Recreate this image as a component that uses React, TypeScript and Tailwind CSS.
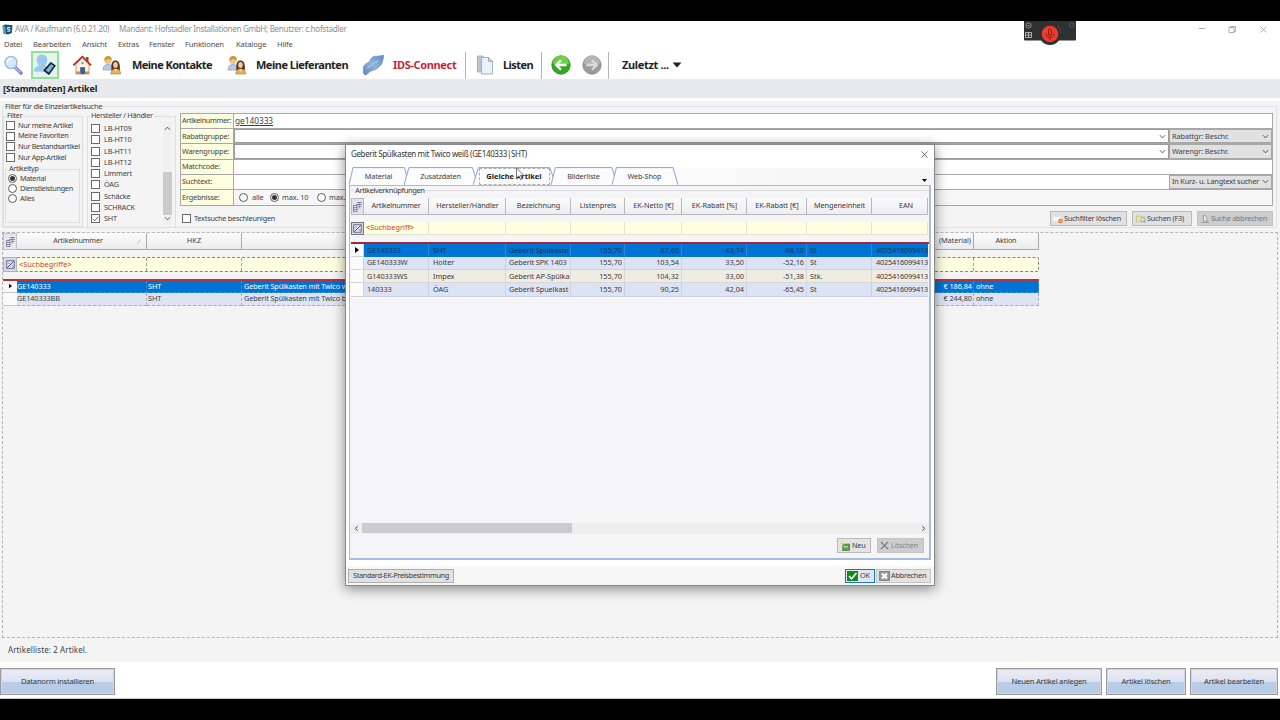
import React from "react";

type Kids = { children?: React.ReactNode };

/* ---------- icons ---------- */

const Chevron = ({ dir = "down", className = "" }: { dir?: "down" | "up" | "left" | "right"; className?: string }) => {
  const d = { down: "M1 2.5 4 5.5 7 2.5", up: "M1 5.5 4 2.5 7 5.5", left: "M5.5 1.5 2.5 4 5.5 6.5", right: "M2.5 1.5 5.5 4 2.5 6.5" }[dir];
  return (
    <svg viewBox="0 0 8 8" className={`size-[7px] shrink-0 ${className}`} fill="none" stroke="currentColor" strokeWidth="1">
      <path d={d} />
    </svg>
  );
};

const Magnifier = () => (
  <svg viewBox="0 0 20 20" className="size-5">
    <path d="M12 12 18 18" stroke="#7d79c4" strokeWidth="3.4" strokeLinecap="round" />
    <path d="M12 12 17.4 17.2" stroke="#c4c0ee" strokeWidth="1.2" strokeLinecap="round" />
    <circle cx="8" cy="7.4" r="6" fill="#cfe9f8" stroke="#a5bccf" strokeWidth="1.5" />
    <path d="M4 7.4A4 4 0 0 1 9 3.6" fill="none" stroke="#fff" strokeWidth="1.6" />
  </svg>
);

const ContactPhone = () => (
  <svg viewBox="0 0 24 24" className="size-6">
    <path d="M1 18.500c0-3.500 2-4.800 5-5.700C4.500 11 3.800 9 3.800 6.800 3.800 3.500 6 1.500 9 1.500s5.200 2 5.200 5.300c0 2.200-.7 4.400-2.200 6 2.500.8 4.500 2 5 4.200l-1.500 2z" fill="#9dc9ec" />
    <path d="m11 17.500 6.800-7.800 4.400 3-6.400 8.600z" fill="#27394d" stroke="#1d2a39" strokeWidth="1.200" strokeLinejoin="round" />
    <path d="m12.800 17.300 5.300-6 2.600 1.700-5 6.500z" fill="#7db4e0" />
  </svg>
);

const House = () => (
  <svg viewBox="0 0 20 20" className="size-5">
    <path d="M14 2h2.500v5H14z" fill="#a63a2a" />
    <path d="M4 9v10h13V9l-6.500-6z" fill="#fdf3e2" stroke="#b98a5a" strokeWidth=".8" />
    <path d="M1.300 10.400 10.400 1.600 19 10.400" fill="none" stroke="#b5392b" strokeWidth="2" strokeLinejoin="round" />
    <path d="M8.200 12.200h4.800V19H8.200z" fill="#3d5f93" />
    <path d="M4 16.500h4.200V19H4zM13 16.500h4V19h-4z" fill="#d98a3c" />
    <circle cx="10.500" cy="8" r="1.300" fill="#7a9cc8" />
  </svg>
);

const People = () => (
  <svg viewBox="0 0 20 20" className="size-5">
    <path d="M1 15c0-4 2-5.500 5-5.500s5 1.500 5 5.500z" fill="#b9cbe6" stroke="#7d90b3" strokeWidth=".6" />
    <circle cx="6" cy="5.600" r="3.500" fill="#f0c18c" />
    <path d="M2.400 6C2 2.600 4 1.100 6.300 1.100S10 2.600 9.600 5.300C8 5 6.500 4.200 5.500 3.500 5 5 3.500 5.500 2.400 6z" fill="#c99a2e" />
    <path d="M9.500 15.500c-1-8.500 1.500-10 4-10s5 2 4.300 10z" fill="#5b3424" />
    <ellipse cx="13.500" cy="10" rx="2.300" ry="2.900" fill="#f3c79c" />
    <path d="M8.800 19c0-3.600 2-5 4.900-5s5 1.400 5 5z" fill="#e4b250" stroke="#a97c26" strokeWidth=".6" />
    <path d="m12 14 1.700 3 1.600-3z" fill="#f8dcb8" />
  </svg>
);

const Feather = () => (
  <svg viewBox="0 0 22 22" className="size-[22px]">
    <defs>
      <linearGradient id="ft" x1="0" y1="1" x2="1" y2="0">
        <stop offset="0" stopColor="#6483ba" />
        <stop offset=".5" stopColor="#8fb2da" />
        <stop offset="1" stopColor="#5d8bc9" />
      </linearGradient>
    </defs>
    <path d="M1.500 15.500c-.8-2.300.6-3.300 1-4.500.8-1 2.800-2 4.700-3.100C8.200 5.500 9.500 3 12.500 2.300c3-.4 5.500.2 8.800-1.300.9 2.500-.3 4-.8 6-.3 3-1.500 4-3.100 5.500-1.900 2.500-4.400 3.200-6.900 4-3 .5-4 3-7 4.700C1.500 20.500.8 18 1.500 15.500z" fill="url(#ft)" stroke="#6a88b8" strokeWidth=".6" />
    <path d="M5 14c3-2 6-5 11-7" fill="none" stroke="#a5c2e4" strokeWidth="1.400" />
  </svg>
);

const Docs = () => (
  <svg viewBox="0 0 18 20" className="h-5 w-[18px]">
    <path d="M1.500 1h5l2 1.500V17h-7z" fill="#b9c6d3" stroke="#93a2b3" strokeWidth=".8" />
    <path d="M5.500 2.500h7l4 4V19h-11z" fill="#e9f2fa" stroke="#9aabbc" strokeWidth=".9" />
    <path d="M12.500 2.500v4h4z" fill="#c3d3e2" stroke="#8fa1b3" strokeWidth=".7" />
  </svg>
);

const RoundArrow = ({ green }: { green?: boolean }) => (
  <svg viewBox="0 0 20 20" className="size-5">
    <circle cx="10" cy="10" r="9.200" fill={green ? "#35a81f" : "#9b9b9b"} stroke={green ? "#2c861c" : "#8d8d8d"} strokeWidth=".8" />
    <path d="M2 8.500a8 8 0 0 1 16 0c-5 2.500-11 2.500-16 0z" fill={green ? "#6cd048" : "#b5b5b5"} />
    <path
      d={green ? "M15.500 10H6M10 5.200 5.200 10 10 14.800" : "M4.500 10H14M10 5.200 14.800 10 10 14.800"}
      fill="none"
      stroke={green ? "#fff" : "#dcdcdc"}
      strokeWidth="2.300"
    />
  </svg>
);

const AppLogo = () => (
  <svg viewBox="0 0 11 11" className="size-[11px]">
    <path d="M.5 2 3 .5 10.500 1.200 9.800 9 6 10.600 1.500 9.500z" fill="#20506f" />
    <path d="M.5 2 3.300 2.500 4 10 1.500 9.500z" fill="#58a4c9" />
    <path d="M8.400 3.500H5.600v1.800h2.200v1.900H5.200" fill="none" stroke="#e8f4fa" strokeWidth="1" />
  </svg>
);

const ColumnsIcon = () => (
  <svg viewBox="0 0 11 12" className="h-3 w-[11px]" fill="none" stroke="#6d7594" strokeWidth=".8">
    <path d="M1.500 4.500h3.500v6H1.500zM1.500 6.500H5M1.500 8.500H5M5 1.500h5M4 3.500h6M7 1.500v6M7 5.500h2.500" />
  </svg>
);

const FilterIcon = () => (
  <svg viewBox="0 0 10 10" className="size-[9px]" fill="none">
    <path d="M.8.8h8.400v8.400H.8z" fill="#e9e9f4" stroke="#4a5180" strokeWidth=".9" />
    <path d="M1.500 8.500 8.500 1.500" stroke="#3f4672" strokeWidth="1.100" />
    <path d="M2 3.500h2.500M6 6.500h2v1.500" stroke="#6a70a0" strokeWidth=".8" />
  </svg>
);

/* ---------- form bits ---------- */

const Box = ({ on }: { on?: boolean }) => (
  <span className="flex size-[9px] shrink-0 items-center justify-center border border-[#6a6a6a] bg-white">
    {on && (
      <svg viewBox="0 0 8 8" className="size-2" fill="none" stroke="#333" strokeWidth=".9">
        <path d="m1 4 2 2 4-4.500" />
      </svg>
    )}
  </span>
);

const Radio = ({ on }: { on?: boolean }) => (
  <span className="flex size-[9px] shrink-0 items-center justify-center rounded-full border border-[#5c5c5c] bg-white">
    {on && <span className="size-[5px] rounded-full bg-[#333]" />}
  </span>
);

const Legend = ({ children }: Kids) => (
  <div className="-mt-[6px] ml-[2px] flex h-[10px] w-fit items-center bg-[#f4f4f5] px-px whitespace-nowrap">{children}</div>
);

const GlossButton = ({ children, className }: Kids & { className: string }) => (
  <button
    className={`flex h-[27px] items-center justify-center border border-[#9a9a9e] bg-linear-to-b from-[#eceef6] from-0% via-[#dce2f0] via-50% to-[#b9cce6] to-50% text-[7.600px] tracking-[-0.220px] text-[#33363c] shadow-[inset_0_0_0_1px_#cfd6e4] ${className}`}
  >
    {children}
  </button>
);

const GrayButton = ({ children, className }: Kids & { className: string }) => (
  <button className={`flex items-center border whitespace-nowrap ${className}`}>{children}</button>
);

/* ---------- data ---------- */

const menu: [string, string][] = [
  ["Datei", "w-[29px]"],
  ["Bearbeiten", "w-[49px]"],
  ["Ansicht", "w-9"],
  ["Extras", "w-[31px]"],
  ["Fenster", "w-9"],
  ["Funktionen", "w-[51px]"],
  ["Kataloge", "w-[41px]"],
  ["Hilfe", "w-8"],
];

const makers = ["LB-HT09", "LB-HT10", "LB-HT11", "LB-HT12", "Limmert", "ÖAG", "Schäcke", "SCHRACK", "SHT"];

const criteria = ["Artikelnummer:", "Rabattgruppe:", "Warengruppe:", "Matchcode:", "Suchtext:", "Ergebnisse:"];

const heads = [
  "Artikelnummer",
  "Hersteller/Händler",
  "Bezeichnung",
  "Listenpreis",
  "EK-Netto [€]",
  "EK-Rabatt [%]",
  "EK-Rabatt [€]",
  "Mengeneinheit",
  "EAN",
];

const links = [
  ["GE140333", "SHT", "Geberit Spülkaste", "155,70", "87,60", "43,74", "-68,10", "St", "4025416099413"],
  ["GE140333W", "Holter", "Geberit SPK 1403", "155,70", "103,54", "33,50", "-52,16", "St", "4025416099413"],
  ["G140333WS", "Impex", "Geberit AP-Spülka", "155,70", "104,32", "33,00", "-51,38", "Stk.", "4025416099413"],
  ["140333", "ÖAG", "Geberit Spuelkast", "155,70", "90,25", "42,04", "-65,45", "St", "4025416099413"],
];

const linkCols = "grid grid-cols-[13px_65px_77px_65px_54px_57px_65px_60px_65px_56px]";
const mainCols = "grid grid-cols-[14px_130px_95px_590px_142px_65px]";

/* ---------- main window ---------- */

const TitleBar = () => (
  <div className="flex h-[17px] shrink-0 items-center text-[8.100px] tracking-[-0.320px] whitespace-pre text-[#8f8f8f]">
    <div className="flex w-[15px] pl-0.5">
      <AppLogo />
    </div>
    <span className="w-[104px]">AVA / Kaufmann (6.0.21.20)</span>
    <span className="flex-1">Mandant: Hofstadler Installationen GmbH; Benutzer: c.hofstadler</span>
    <svg viewBox="0 0 80 12" className="mr-1 h-3 w-20" fill="none" stroke="#999" strokeWidth=".8">
      <path d="M3 4.500h6M33 3.500h5v5h-5zM34.500 3.500v-1h5v5H38M64.500 2.500l6 6M70.500 2.500l-6 6" />
    </svg>
  </div>
);

const Sep = ({ className }: { className: string }) => (
  <div className={`shrink-0 ${className}`}>
    <div className="h-[27px] w-px bg-[#b4b4b8]" />
  </div>
);

const Toolbar = () => (
  <div className="flex h-[28px] shrink-0 items-center text-[11px] font-bold tracking-[-0.350px] whitespace-nowrap text-[#222]">
    <div className="w-[31px] shrink-0 pl-[3px]"><Magnifier /></div>
    <div className="w-[41px] shrink-0">
      <div className="flex size-7 items-center justify-center border-2 border-[#95df9b] bg-[#e3f3ee]"><ContactPhone /></div>
    </div>
    <div className="w-[30px] shrink-0"><House /></div>
    <div className="w-[30px] shrink-0"><People /></div>
    <span className="w-[95px] shrink-0 pb-px tracking-[-0.550px]">Meine Kontakte</span>
    <div className="w-[29px] shrink-0"><People /></div>
    <span className="w-[106px] shrink-0 pb-px tracking-[-0.500px]">Meine Lieferanten</span>
    <div className="w-[31px] shrink-0"><Feather /></div>
    <span className="w-[72px] shrink-0 pb-px text-[#cb1f3c]">IDS-Connect</span>
    <Sep className="w-[11px]" />
    <div className="w-[27px] shrink-0"><Docs /></div>
    <span className="w-[38px] shrink-0 pb-px tracking-[-0.550px]">Listen</span>
    <Sep className="w-2.5" />
    <div className="w-[31px] shrink-0"><RoundArrow green /></div>
    <div className="w-[26px] shrink-0"><RoundArrow /></div>
    <Sep className="w-[14px]" />
    <span className="w-[50px] shrink-0 pb-px">Zuletzt ...</span>
    <svg viewBox="0 0 10 6" className="h-[6px] w-2.5"><path d="M.5.5h9L5 5.500z" fill="#222" /></svg>
  </div>
);

const FilterPanel = () => (
  <div className="h-[131px] shrink-0 pt-[5px]">
    <div className="mr-[3px] ml-[2px] h-[122px] border border-[#e2e2e4]">
      <div className="-mt-[6px] ml-0.5 flex h-[11px] w-fit items-center bg-[#f4f4f5] text-[7.500px] tracking-[-0.330px]">
        Filter für die Einzelartikelsuche
      </div>
      <div className="flex">
        <div className="mt-[4px] h-[111px] w-[80px] shrink-0 border border-[#dedee0] tracking-[-0.330px]">
          <Legend>Filter</Legend>
          <div className="-mt-px flex flex-col pl-[2px]">
            {["Nur meine Artikel", "Meine Favoriten", "Nur Bestandsartikel", "Nur App-Artikel"].map((t) => (
              <label key={t} className="flex h-[10.700px] items-center gap-[3px] whitespace-nowrap">
                <Box />
                {t}
              </label>
            ))}
          </div>
          <div className="mt-[6px] mr-[2px] ml-px h-[54px] border border-[#dedee0]">
            <Legend>Artikeltyp</Legend>
            <div>
              {["Material", "Dienstleistungen", "Alles"].map((t, i) => (
                <label key={t} className="flex h-[10px] items-center gap-[3px] pl-[2px] whitespace-nowrap">
                  <Radio on={i === 0} />
                  {t}
                </label>
              ))}
            </div>
          </div>
        </div>
        <div className="mt-[4px] ml-[4px] h-[112px] w-[89px] shrink-0 border border-[#dedee0]">
          <div className="tracking-[-0.300px]"><Legend>Hersteller / Händler</Legend></div>
          <div className="flex">
            <div className="flex w-[75px] flex-col pt-[2px] pl-[3px] tracking-[-0.180px]">
              {makers.map((t, i) => (
                <label key={t} className="flex h-[11.270px] items-center gap-[4px]">
                  <Box on={i === 8} />
                  {t}
                </label>
              ))}
            </div>
            <div className="mt-px flex h-[103px] w-[9px] flex-col items-center justify-between bg-[#f0f0f1] py-[3px]">
              <Chevron dir="up" />
              <div className="mt-[39px] h-[43px] w-[9px] bg-[#cbcbcd]" />
              <Chevron />
            </div>
          </div>
        </div>
        <div className="ml-[4px] flex-1 pt-px pr-[3px]">
          <div className="h-[93px] border border-[#a8a8a8]">
            {criteria.map((t, i) => (
              <div key={t} className={`flex h-[15.200px] ${i < 5 ? "border-b border-[#a8a8a8]" : ""}`}>
                <div className={`flex w-[53px] shrink-0 items-center border-r border-[#a8a8a8] bg-[#fdfde0] pl-px ${i === 0 ? "tracking-[-0.350px]" : "tracking-[-0.180px]"}`}>{t}</div>
                {i === 5 ? (
                  <div className="flex flex-1 items-center bg-[#f6f6f6] pl-[5px] tracking-[-0.100px]">
                    <div className="flex w-[31px] items-center gap-1"><Radio />alle</div>
                    <div className="flex w-[47px] items-center gap-[3px]"><Radio on />max. 10</div>
                    <div className="flex items-center gap-[3px]"><Radio />max. 100</div>
                  </div>
                ) : (
                  <>
                    <div className={`flex flex-1 items-center justify-between bg-white pr-[2px] pl-px ${i === 1 || i === 2 ? "border border-[#9a9a9a]" : ""}`}>
                      <span className="text-[8.300px] tracking-[-0.020px] underline">{i === 0 ? "ge140333" : ""}</span>
                      {(i === 1 || i === 2) && <Chevron />}
                    </div>
                    {i === 0 || i === 3 ? (
                      <div className="w-[103px] shrink-0 bg-white" />
                    ) : (
                      <div className="flex w-[103px] shrink-0 items-center justify-between border border-[#a8a8a8] bg-[#e1e1e2] pr-[2px] pl-[2px] whitespace-nowrap">
                        <span className={i === 4 ? "tracking-[-0.180px]" : "tracking-[-0.080px]"}>{i === 1 ? "Rabattgr: Beschr." : i === 2 ? "Warengr: Beschr." : "In Kurz- u. Langtext sucher"}</span>
                        <Chevron />
                      </div>
                    )}
                  </>
                )}
              </div>
            ))}
          </div>
          <div className="mt-[5px] flex h-[15px] items-center pl-[2px] tracking-[-0.220px]">
            <Box />
            <span className="ml-[3px] flex-1">Textsuche beschleunigen</span>
            <GrayButton className="mr-[5px] h-[15px] w-[77px] gap-px border-[#b9b9bb] bg-[#e1e1e2] pl-[2px]">
              <svg viewBox="0 0 10 10" className="size-2.5">
                <path d="M0 3h8v4H0z" fill="#f8f8f4" />
                <circle cx="7.500" cy="7" r="2.300" fill="#d9762e" />
                <path d="M6.300 7h2.400" stroke="#fff" strokeWidth=".8" />
              </svg>
              Suchfilter löschen
            </GrayButton>
            <GrayButton className="mr-[5px] h-[15px] w-[60px] gap-px border-[#b9b9bb] bg-[#e1e1e2] pl-[3px]">
              <svg viewBox="0 0 10 10" className="size-2.5">
                <path d="M.5 2h4l1 1H9v5H.5z" fill="#efe3a0" stroke="#b8aa72" strokeWidth=".6" />
                <circle cx="6.500" cy="5.500" r="1.900" fill="#dfeaf2" stroke="#8799a5" strokeWidth=".7" />
                <path d="m7.800 7 1.600 2" stroke="#8799a5" strokeWidth="1" />
              </svg>
              Suchen (F3)
            </GrayButton>
            <GrayButton className="h-[15px] w-[76px] gap-px border-[#c2c2c4] bg-[#cdcdce] pl-[2px] tracking-[-0.220px] text-[#77777a]">
              <svg viewBox="0 0 10 10" className="size-2.5" stroke="#98989b" strokeWidth=".9">
                <path d="M3.500 1.500h2l2.500 5.500h-4.500z" fill="#e8e8e8" />
                <path d="M1 8.500h8" />
              </svg>
              Suche abbrechen
            </GrayButton>
          </div>
        </div>
      </div>
    </div>
  </div>
);

const mainHead = "flex items-center justify-center border-r border-b border-[#a9a9ab] bg-linear-to-b from-[#fbfbfb] to-[#ececee]";
const mainFind = "border-r border-dashed border-[#a3a38e]";

const MainGrid = () => (
  <div className="mx-[2px] h-[406px] shrink-0 border border-dashed border-[#b5b5b7] text-[7.300px]">
    <div className={`${mainCols} h-[17px] tracking-[-0.180px]`}>
      <div className="flex items-center justify-center border border-[#c3c3c8] bg-[#e6e6ec]"><ColumnsIcon /></div>
      <div className={mainHead}>
        <span className="flex-1 pl-[2px] text-center">Artikelnummer</span>
        <svg viewBox="0 0 4 5" className="mr-[5px] h-[5px] w-1"><path d="M.5 4.500 3.500.5" stroke="#aaa" strokeWidth=".8" /></svg>
      </div>
      <div className={`${mainHead} tracking-[0.150px]`}>HKZ</div>
      <div className={mainHead}>Bezeichnung</div>
      <div className={`${mainHead} justify-end! pr-[2px] tracking-[-0.060px]`}>(Material)</div>
      <div className={mainHead}>Aktion</div>
    </div>
    <div className={`${mainCols} mt-[7px] h-[15px]`}>
      <div className="flex items-center justify-center border border-[#b0b0ba] bg-[#d9d9e4]"><FilterIcon /></div>
      <div className="col-span-5 grid grid-cols-[130px_95px_590px_142px_65px] rounded-r-[2px] border-y border-r border-dashed border-[#85857a] bg-[#fefee1]">
        <div className={`${mainFind} flex items-center pl-[2px] tracking-[0.050px] text-[#d83c2c]`}>&lt;Suchbegriffe&gt;</div>
        <div className={mainFind} />
        <div className={mainFind} />
        <div className={mainFind} />
      </div>
    </div>
    <div className="mt-[7px] h-[1.500px] w-[1036px] bg-[#b8323a]" />
    {[
      ["GE140333", "SHT", "Geberit Spülkasten mit Twico weiß", "€ 186,84", "ohne"],
      ["GE140333BB", "SHT", "Geberit Spülkasten mit Twico braun", "€ 244,80", "ohne"],
    ].map((r, i) => (
      <div key={r[0]} className={`${mainCols} h-[12.500px] *:flex *:items-center ${i === 0 ? "text-white" : "text-[#3c3f45]"}`}>
        <div className="justify-center border-b border-[#c8c8c8] bg-[#fafafa]">
          {i === 0 && <svg viewBox="0 0 4 6" className="h-[6px] w-[3px]"><path d="M0 0 4 3 0 6z" fill="#000" /></svg>}
        </div>
        {r.map((c, j) => (
          <div
            key={j}
            className={`border-r border-b border-dashed whitespace-nowrap ${i === 0 ? "border-[#3c8fdc] bg-[#0074d4]" : "border-[#a9afc0] bg-[#dde3f2]"} ${
              j === 3 ? "justify-end pr-px" : j === 0 ? "tracking-[-0.100px]" : j === 4 ? "pl-[2px]" : j === 2 ? "pl-[2px] tracking-[-0.130px]" : "pl-px"
            }`}
          >
            {c}
          </div>
        ))}
      </div>
    ))}
  </div>
);

/* ---------- dialog ---------- */

const tabs: { t: string; w: string; on?: boolean }[] = [
  { t: "Material", w: "w-[55px]" },
  { t: "Zusatzdaten", w: "w-[69px]" },
  { t: "Gleiche Artikel", w: "w-[78px]", on: true },
  { t: "Bilderliste", w: "w-[61px]" },
  { t: "Web-Shop", w: "w-[61px]" },
];

const Tab = ({ t, w, on }: { t: string; w: string; on?: boolean }) => (
  <div className={`relative flex h-[18px] shrink-0 items-center justify-center ${w}`}>
    <svg viewBox="0 0 60 18" preserveAspectRatio="none" className="absolute inset-y-0 -left-[2px] h-full w-[calc(100%+5px)]">
      <path d="M0 18 4 .6H55.500L60 18" fill="#fcfcfe" stroke="#8fa3cf" strokeWidth="1" vectorEffect="non-scaling-stroke" />
    </svg>
    {on ? (
      <span className="relative flex h-[17px] w-[71px] items-center justify-center border border-dashed border-[#b0b0b0] pt-px text-[7.500px] font-bold tracking-[0.020px] text-[#222]">{t}</span>
    ) : (
      <span className="relative pt-px tracking-[-0.130px]">{t}</span>
    )}
  </div>
);

const headPad = (i: number) => (i === 0 ? "tracking-[-0.220px]" : i === 8 ? "pl-[13px]" : "pl-px");

const cellPad = (j: number) => {
  if (j >= 3 && j <= 6) return "justify-end border-r pr-[2px]";
  if (j === 8) return "pl-1 tracking-[-0.180px]";
  if (j === 1) return "border-r pl-1 tracking-[-0.040px]";
  if (j === 7) return "border-r pl-[3px]";
  return "border-r pl-[3px] tracking-[-0.080px]";
};

const Dialog = () => (
  <div className="absolute top-[144px] left-[345px] flex h-[442px] w-[590px] flex-col border border-[#86888c] bg-white text-[7.300px] text-[#3a3a3e] shadow-[0_3px_12px_rgba(0,0,0,0.45)]">
    <div className="flex h-[18px] shrink-0 items-center justify-between pr-[6px] pl-[5px] text-[8px] tracking-[-0.360px] text-[#333]">
      Geberit Spülkasten mit Twico weiß (GE140333|SHT)
      <svg viewBox="0 0 8 8" className="size-[7px]" stroke="#444" strokeWidth=".9"><path d="m.5.5 7 7M7.500.5l-7 7" /></svg>
    </div>
    <div className="mt-[5px] flex h-[17px] shrink-0 items-end bg-linear-to-r from-white to-[#f5f5f6] pl-[5px]">
      {tabs.map((x) => (
        <Tab key={x.t} {...x} />
      ))}
      <div className="flex flex-1 justify-end pr-[7px] pb-[3px]">
        <svg viewBox="0 0 5 3" className="h-[3px] w-[5px]"><path d="M0 0h5L2.500 3z" fill="#000" /></svg>
      </div>
    </div>
    <div className="mr-[3px] ml-[3px] flex h-[375px] shrink-0 flex-col border border-r-2 border-b-2 border-[#a9bbdb] bg-[#f5f4f6]">
      <div className="mt-[4px] ml-px h-[343px] w-[578px] border-t border-[#dcdce2]">
        <div className="-mt-[5px] ml-[3px] flex h-[10px] w-fit items-center bg-[#f5f4f6] px-px text-[7.600px] tracking-[-0.420px]">Artikelverknüpfungen</div>
        <div className={`${linkCols} mt-[2px] h-[17px] tracking-[-0.070px]`}>
          <div className="flex items-center justify-center border border-[#b9b9c2] bg-[#e2e2ea]"><ColumnsIcon /></div>
          {heads.map((h, i) => (
            <div key={i} className={`flex items-center justify-center border-r border-b border-[#b9b9bd] bg-linear-to-b from-[#fafafa] to-[#eeeef1] whitespace-nowrap ${headPad(i)}`}>{h}</div>
          ))}
        </div>
        <div className={`${linkCols} mt-[7px] h-[13px]`}>
          <div className="flex items-center justify-center border border-[#77778a] bg-[#d5d5e2]"><FilterIcon /></div>
          {heads.map((h, i) => (
            <div key={i} className="flex items-center border-r border-b border-[#e4e4cc] bg-[#fefee1] pl-[2px] tracking-[0.020px] text-[#d83c2c]">{i === 0 ? "<Suchbegriff>" : ""}</div>
          ))}
        </div>
        <div className="mt-[7px] h-[1.500px] bg-[#a3283c]" />
        {links.map((r, i) => (
          <div key={i} className={`${linkCols} h-[13.300px] *:flex *:items-center ${i === 0 ? "text-[#0a3566]" : ""}`}>
            <div className="justify-center border-r border-b border-[#d4d4d8] bg-[#fbfbfb]">
              {i === 0 && <svg viewBox="0 0 4 6" className="h-[6px] w-1"><path d="M0 0 4 3 0 6z" fill="#000" /></svg>}
            </div>
            {r.map((c, j) => (
              <div
                key={j}
                className={`overflow-hidden whitespace-nowrap ${cellPad(j)} ${
                  i === 0 ? "border-[#2f86d6] bg-[#0074d4]" : i === 2 ? "border-b border-[#d9d7d2] bg-[#efece3]" : "border-b border-[#ccd2e0] bg-[#dce3f4]"
                }`}
              >
                {c}
              </div>
            ))}
          </div>
        ))}
        <div className="mt-[226px] flex h-[11px] items-center bg-[#eeeeef] pl-[2px]">
          <Chevron dir="left" className="mr-[2px]" />
          <div className="h-[10px] w-[210px] bg-[#cdcbcd]" />
          <Chevron dir="right" className="mr-[2px] ml-auto" />
        </div>
      </div>
      <div className="mt-[5px] flex h-[15px] justify-end gap-[6px] pr-[5px]">
        <GrayButton className="h-[15px] w-[34px] gap-[2px] border-[#b9b9bb] bg-[#e3e3e5] pl-[2px] tracking-[-0.200px]">
          <svg viewBox="0 0 10 10" className="size-[10px]">
            <path d="M2.500 4.500 4 3h6v6L8.500 10h-6z" fill="#5a9f55" stroke="#3d753b" strokeWidth=".5" />
            <path d="M3.500 5h4.500v1.500H3.500z" fill="#a6d6a0" />
            <path d="M2.500 0 3.200 1.800 5 2.500 3.200 3.200 2.500 5 1.800 3.200 0 2.500 1.800 1.800z" fill="#f2d83d" />
          </svg>
          Neu
        </GrayButton>
        <GrayButton className="h-[15px] w-[47px] gap-[2px] border-[#c4c4c6] bg-[#cdcdcf] pl-[2px] tracking-[-0.180px] text-[#848488]">
          <svg viewBox="0 0 8 8" className="size-[9px]" stroke="#77777b" strokeWidth="1.100"><path d="m.8.8 6.400 6.400M7.200.8.8 7.200" /></svg>
          Löschen
        </GrayButton>
      </div>
    </div>
    <div className="mt-[6px] flex flex-1 items-start bg-[#f6f7f4] pt-[3px] pr-[3px] pl-[2px]">
      <GrayButton className="h-[14px] w-[106px] justify-center border-[#adadaf] bg-[#e1e1e2] tracking-[-0.340px]">Standard-EK-Preisbestimmung</GrayButton>
      <div className="flex-1" />
      <GrayButton className="h-[14px] w-[30px] gap-[2px] border-[#1874c4] bg-[#dfe8f0] pl-px tracking-[-0.200px]">
        <svg viewBox="0 0 11 10" className="h-[10px] w-[11px]"><path d="M0 0h11v10H0z" fill="#128a1c" /><path d="m2 5 2.500 2.800L9.500 2" fill="none" stroke="#fff" strokeWidth="1.600" /></svg>
        OK
      </GrayButton>
      <GrayButton className="ml-px h-[14px] w-[55px] gap-px border-[#c2c2c4] bg-[#e3e3e4] pl-[2px] tracking-[-0.220px]">
        <svg viewBox="0 0 11 10" className="h-[10px] w-[11px]"><path d="M0 0h11v10H0z" fill="#85878c" /><path d="M1.500 1.500h8v7h-8z" fill="#a4a6ab" /><path d="m3 2.500 5 5M8 2.500l-5 5" stroke="#fff" strokeWidth="1.800" /></svg>
        Abbrechen
      </GrayButton>
    </div>
  </div>
);

const Recorder = () => (
  <svg viewBox="0 0 54 26" className="absolute top-[20px] left-[1023px] h-[26px] w-[54px]">
    <path d="M1 1h52v18.500a1 1 0 0 1-1 1H2a1 1 0 0 1-1-1z" fill="#2f3032" />
    <circle cx="27" cy="14" r="11" fill="#2f3032" />
    <circle cx="27" cy="14" r="8.300" fill="#ee3b2f" />
    <rect x="25.500" y="9" width="3" height="6.500" rx="1.500" fill="none" stroke="#7c1d18" strokeWidth="1" />
    <path d="M23 13.500c0 5.500 8 5.500 8 0M27 17.500v2.500" fill="none" stroke="#7c1d18" strokeWidth="1" />
    <circle cx="5.500" cy="5.500" r="2.600" fill="none" stroke="#a8a8a8" strokeWidth=".8" />
    <path d="M4.500 5.500h2M2.500 12.500h6v5h-6zM5.500 12.500v5M2.500 15h6" fill="none" stroke="#bdbdbd" strokeWidth=".9" />
    <circle cx="48.500" cy="5" r="2.300" fill="none" stroke="#5f5f5f" strokeWidth=".8" />
    <path d="M35 6.500h1M36.500 9h1M37 12h1" stroke="#777" strokeWidth="1" />
  </svg>
);

const Cursor = () => (
  <svg viewBox="0 0 12 17" className="absolute top-[167px] left-[516px] h-[15px] w-[10px]">
    <path d="M.6.8v12l2.900-2.700 2 4.500 1.800-.8-2-4.300h4z" fill="#fff" stroke="#333" strokeWidth=".8" />
  </svg>
);

export default function App() {
  return (
    <div className="relative flex h-[720px] w-[1280px] flex-col overflow-hidden bg-black py-[21px] font-['Noto_Sans','Open_Sans',sans-serif] leading-none">
      <div className="flex h-[678px] flex-col bg-white">
        <TitleBar />
        <div className="flex h-[13px] shrink-0 items-center pl-1 text-[7.600px] tracking-[-0.150px] text-[#4c4c4c]">
          {menu.map(([t, w]) => (
            <span key={t} className={`shrink-0 ${w}`}>{t}</span>
          ))}
        </div>
        <Toolbar />
        <div className="flex h-[19px] shrink-0 items-center bg-[#e8e9ed] pl-[3px] text-[9px] font-bold tracking-[-0.130px] text-[#222]">[Stammdaten] Artikel</div>
        <div className="mt-[3px] flex h-[561px] shrink-0 flex-col bg-[#f4f4f5] text-[7.300px] tracking-[-0.050px] text-[#3f3f43]">
          <FilterPanel />
          <MainGrid />
          <div className="flex flex-1 items-center pl-[8px] text-[8px] tracking-[0.100px]">Artikelliste: 2 Artikel.</div>
        </div>
        <div className="flex flex-1 items-start gap-[4px] border-b border-[#c9c9c9] pt-[6px] pr-[2px]">
          <GlossButton className="w-[115px]">Datanorm installieren</GlossButton>
          <div className="flex-1" />
          <GlossButton className="w-[106px]">Neuen Artikel anlegen</GlossButton>
          <GlossButton className="w-[80px]">Artikel löschen</GlossButton>
          <GlossButton className="w-[88px]">Artikel bearbeiten</GlossButton>
        </div>
      </div>
      <Dialog />
      <Recorder />
      <Cursor />
    </div>
  );
}
